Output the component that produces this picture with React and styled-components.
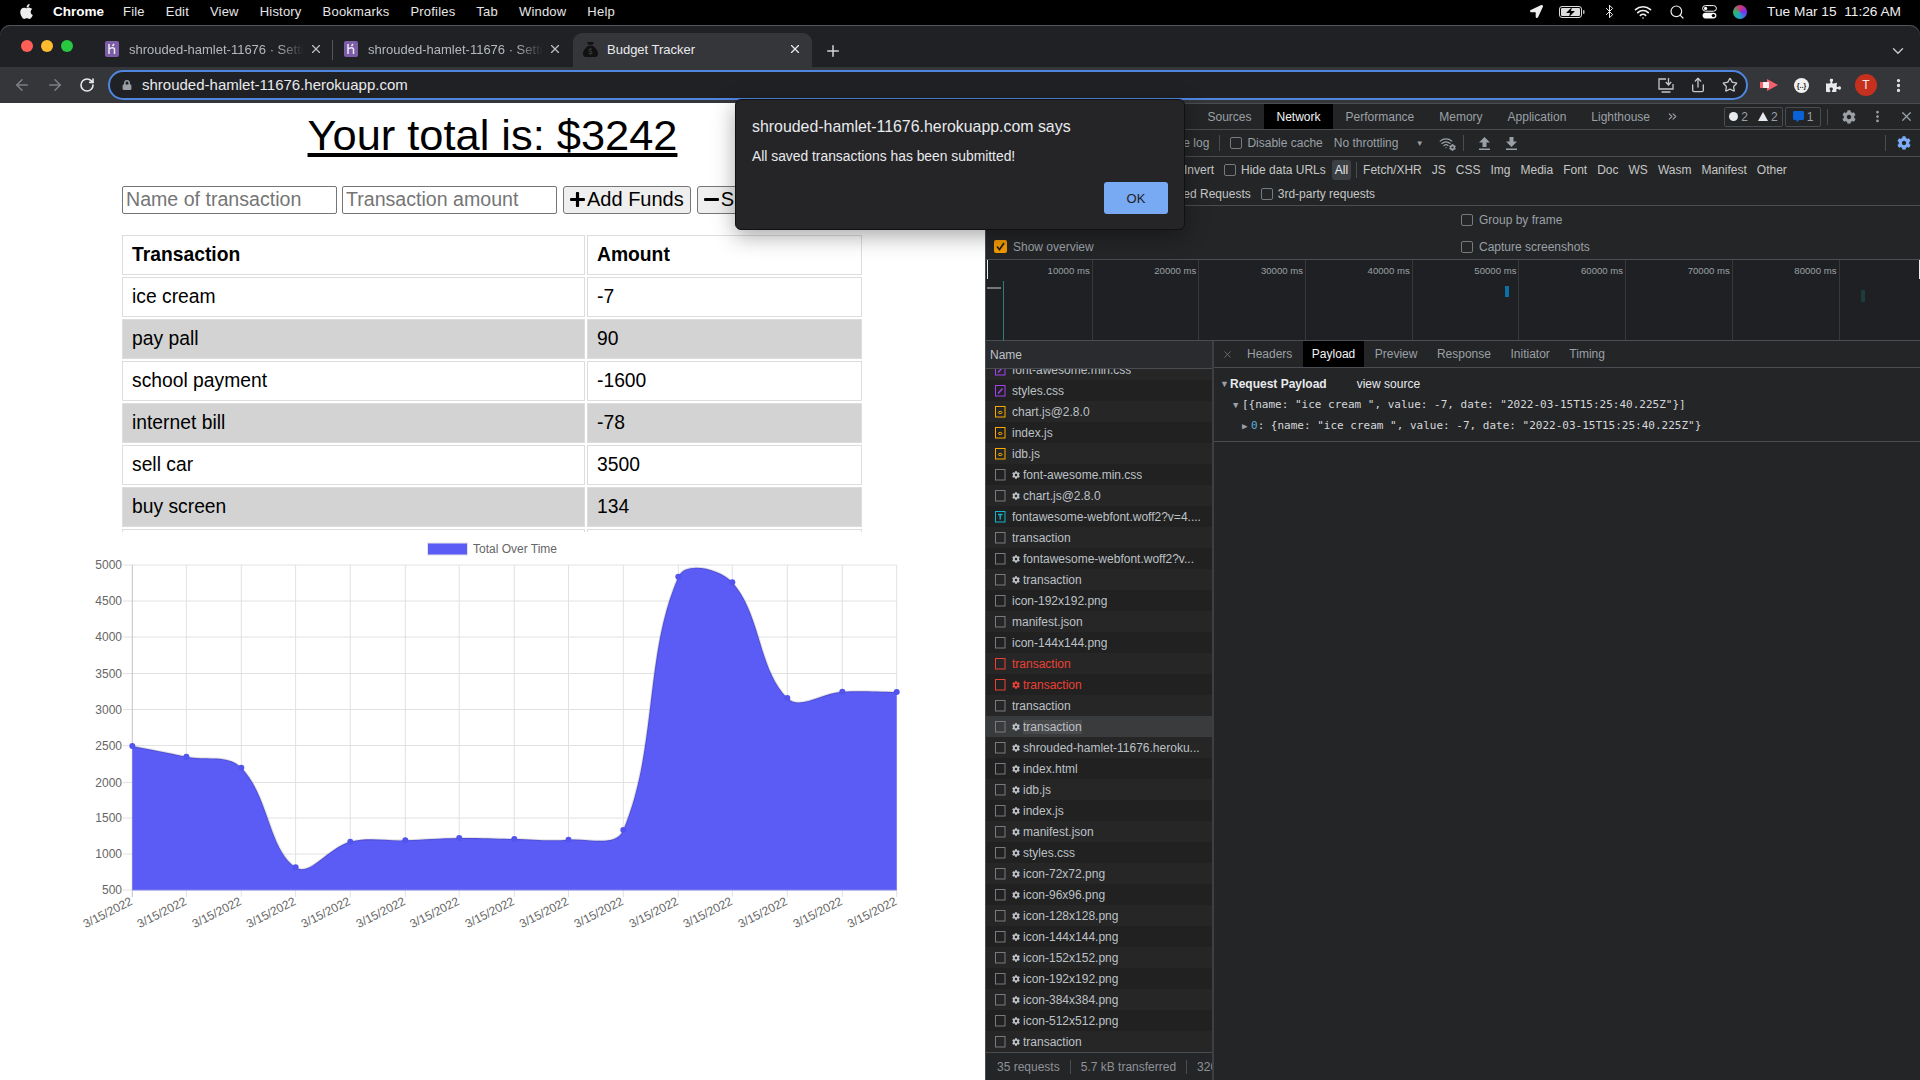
import React from 'react';
import styled, { createGlobalStyle } from 'styled-components';
import {
	ArrowLeft,
	ArrowRight,
	RotateCw,
	Star,
	Share,
	X,
	Plus,
	ChevronDown,
	Search,
	Bluetooth,
	Wifi,
	EllipsisVertical,
	ChevronsRight,
} from 'lucide-react';
import { FaApple, FaPlus, FaMinus, FaCog, FaPuzzlePiece, FaLocationArrow, FaLock, FaCommentAlt } from 'react-icons/fa';
import { FaSackDollar } from 'react-icons/fa6';

const SANS = '"Liberation Sans", Arial, sans-serif';

const MENU = ['File', 'Edit', 'View', 'History', 'Bookmarks', 'Profiles', 'Tab', 'Window', 'Help'];

const ROWS = [
	['ice cream', '-7'],
	['pay pall', '90'],
	['school payment', '-1600'],
	['internet bill', '-78'],
	['sell car', '3500'],
	['buy screen', '134'],
	['', ''],
];

const FILTERS = ['Fetch/XHR', 'JS', 'CSS', 'Img', 'Media', 'Font', 'Doc', 'WS', 'Wasm', 'Manifest', 'Other'];
const TICKS = ['10000 ms', '20000 ms', '30000 ms', '40000 ms', '50000 ms', '60000 ms', '70000 ms', '80000 ms', '900'];

const REQUESTS = [
	{ name: 'font-awesome.min.css', kind: 'css' },
	{ name: 'styles.css', kind: 'css' },
	{ name: 'chart.js@2.8.0', kind: 'js' },
	{ name: 'index.js', kind: 'js' },
	{ name: 'idb.js', kind: 'js' },
	{ name: 'font-awesome.min.css', gear: true },
	{ name: 'chart.js@2.8.0', gear: true },
	{ name: 'fontawesome-webfont.woff2?v=4....', kind: 'font' },
	{ name: 'transaction' },
	{ name: 'fontawesome-webfont.woff2?v...', gear: true },
	{ name: 'transaction', gear: true },
	{ name: 'icon-192x192.png' },
	{ name: 'manifest.json' },
	{ name: 'icon-144x144.png' },
	{ name: 'transaction', kind: 'error' },
	{ name: 'transaction', kind: 'error', gear: true },
	{ name: 'transaction' },
	{ name: 'transaction', gear: true, selected: true },
	{ name: 'shrouded-hamlet-11676.heroku...', gear: true },
	{ name: 'index.html', gear: true },
	{ name: 'idb.js', gear: true },
	{ name: 'index.js', gear: true },
	{ name: 'manifest.json', gear: true },
	{ name: 'styles.css', gear: true },
	{ name: 'icon-72x72.png', gear: true },
	{ name: 'icon-96x96.png', gear: true },
	{ name: 'icon-128x128.png', gear: true },
	{ name: 'icon-144x144.png', gear: true },
	{ name: 'icon-152x152.png', gear: true },
	{ name: 'icon-192x192.png', gear: true },
	{ name: 'icon-384x384.png', gear: true },
	{ name: 'icon-512x512.png', gear: true },
	{ name: 'transaction', gear: true },
];

// chart points in page pixels, read off the screenshot
const CHART_TOP = 532;
const POINTS = [
	[132.3, 746], [186.4, 756.7], [241.3, 767.7], [295.6, 867.3], [350.3, 841.7],
	[405.3, 840.3], [459.2, 838], [514.3, 839], [568.5, 839.7], [623.3, 830],
	[678.3, 576.7], [732.3, 582.3], [787.3, 698], [842.3, 691.7], [896.7, 692],
];
const GRID_Y = [
	[5000, 565], [4500, 601], [4000, 637], [3500, 673.5], [3000, 709.5],
	[2500, 745.5], [2000, 782.5], [1500, 818], [1000, 854], [500, 890],
];

function splinePath(points) {
	const tension = 0.38;
	const controls = points.map((cur, i) => {
		const prev = points[i - 1] || cur;
		const next = points[i + 1] || cur;
		const d01 = Math.hypot(cur[0] - prev[0], cur[1] - prev[1]);
		const d12 = Math.hypot(next[0] - cur[0], next[1] - cur[1]);
		const s01 = d01 / (d01 + d12);
		const s12 = d12 / (d01 + d12);
		return {
			before: [cur[0] - tension * s01 * (next[0] - prev[0]), cur[1] - tension * s01 * (next[1] - prev[1])],
			after: [cur[0] + tension * s12 * (next[0] - prev[0]), cur[1] + tension * s12 * (next[1] - prev[1])],
		};
	});
	let d = `M${points[0][0]} ${points[0][1] - CHART_TOP}`;
	for (let i = 1; i < points.length; i++) {
		const a = controls[i - 1].after;
		const b = controls[i].before;
		d += ` C${a[0]} ${a[1] - CHART_TOP} ${b[0]} ${b[1] - CHART_TOP} ${points[i][0]} ${points[i][1] - CHART_TOP}`;
	}
	return d;
}

function Chart() {
	const line = splinePath(POINTS);
	const area = `${line} L896.7 ${890 - CHART_TOP} L132.3 ${890 - CHART_TOP} Z`;
	return (
		<ChartSvg viewBox="0 0 985 400">
			<rect x="427.5" y="11" width="40" height="12" fill="#5b5bf6" stroke="#e4e4e4" />
			<ChartText x="473" y="21">Total Over Time</ChartText>
			{GRID_Y.map(([label, y]) => (
				<g key={label}>
					<line x1="123" x2="896.7" y1={y - CHART_TOP} y2={y - CHART_TOP} stroke="#e2e2e2" />
					<ChartText x="122" y={y - CHART_TOP + 4} textAnchor="end">{label}</ChartText>
				</g>
			))}
			{POINTS.map(([x], i) => (
				<g key={i}>
					<line x1={x} x2={x} y1={565 - CHART_TOP} y2={897 - CHART_TOP} stroke={i === 0 ? '#c4c4c4' : '#e2e2e2'} />
					<ChartText x={x + 1} y={904 - CHART_TOP} textAnchor="end" transform={`rotate(-27 ${x + 1} ${904 - CHART_TOP})`}>
						3/15/2022
					</ChartText>
				</g>
			))}
			<path d={area} fill="#5b5bf6" />
			<path d={line} fill="none" stroke="rgba(0,0,0,0.12)" strokeWidth="2" />
			<line x1="132.3" x2="896.7" y1={890 - CHART_TOP} y2={890 - CHART_TOP} stroke="#8585f0" />
			{POINTS.map(([x, y], i) => (
				<circle key={i} cx={x} cy={y - CHART_TOP} r="3" fill="#5353ee" />
			))}
		</ChartSvg>
	);
}

function HerokuIcon() {
	return (
		<svg width="14" height="16" viewBox="0 0 14 16">
			<rect width="14" height="16" rx="2" fill="#7b5ea7" />
			<path d="M4 3v10M4 8c2-1.6 5-2 5.5 0v5M9 3 7.5 5" stroke="#eee" strokeWidth="1.5" fill="none" />
		</svg>
	);
}

function Battery() {
	return (
		<svg width="26" height="12" viewBox="0 0 26 12">
			<rect x="0.5" y="0.5" width="22" height="11" rx="2.5" fill="none" stroke="#ddd" />
			<rect x="2" y="2" width="19" height="8" rx="1.2" fill="#ddd" />
			<rect x="24" y="4" width="1.5" height="4" rx="0.7" fill="#bbb" />
			<path d="M13 1 7 7h4l-1 4 6-6h-4z" fill="#000" />
		</svg>
	);
}

function ControlCenter() {
	return (
		<svg width="15" height="14" viewBox="0 0 15 14">
			<rect x="0.6" y="0.6" width="13.8" height="5.6" rx="2.8" fill="none" stroke="#fff" />
			<circle cx="3.6" cy="3.4" r="1.6" fill="#fff" />
			<rect x="0.6" y="7.8" width="13.8" height="5.6" rx="2.8" fill="#fff" />
			<circle cx="11.4" cy="10.6" r="1.7" fill="#000" />
		</svg>
	);
}

function Install() {
	return (
		<svg width="16" height="15" viewBox="0 0 16 15" fill="none" stroke="#c4c7c5" strokeWidth="1.3">
			<path d="M8 1h-7v10h14v-5" />
			<path d="M3.5 14h9" />
			<path d="M10.5 0v6.5M7.8 4l2.7 3 2.7-3" />
		</svg>
	);
}

function Pointer() {
	return (
		<svg width="18" height="12" viewBox="0 0 18 12">
			<path d="M0 3h7V0l11 6-11 6V9H0z" fill="#f4606c" />
			<rect x="3" y="3" width="6" height="6" fill="#fff" opacity="0.9" />
		</svg>
	);
}

function FileIcon({ kind }) {
	const color = { css: '#a142f4', js: '#f9ab00', font: '#12b5cb', error: '#e94235' }[kind] || '#777a7e';
	return (
		<FileSvg width="11" height="12" viewBox="0 0 11 12">
			<rect x="0.5" y="0.5" width="9.5" height="10.5" fill="none" stroke={color} />
			{kind === 'css' && <path d="M3 8.5 7.5 3.5" stroke={color} strokeWidth="1.4" />}
			{kind === 'js' && <ellipse cx="5.2" cy="6.5" rx="1.8" ry="1.1" fill="none" stroke={color} />}
			{kind === 'font' && <path d="M3 3.5h4.5M5.2 3.5v5" stroke={color} strokeWidth="1.4" />}
		</FileSvg>
	);
}

function Arrow({ down }) {
	return (
		<ArrowSvg width="11" height="13" viewBox="0 0 11 13" fill="#9aa0a6">
			<path d={down ? 'M3.5 0h4v4.5H11L5.5 10 0 4.5h3.5z' : 'M5.5 0 11 5.5H7.5V10h-4V5.5H0z'} />
			<rect y="11.5" width="11" height="1.5" />
		</ArrowSvg>
	);
}

function Checked() {
	return (
		<svg width="13" height="13" viewBox="0 0 13 13">
			<rect width="13" height="13" rx="2" fill="#f29900" />
			<path d="M3 6.5 5.5 9.5 10 3" stroke="#222" strokeWidth="1.7" fill="none" />
		</svg>
	);
}

function App() {
	return (
		<Screen>
			<GlobalStyle />
			<MenuBar>
				<AppleMark><FaApple size={17} /></AppleMark>
				<MenuApp>Chrome</MenuApp>
				{MENU.map((item) => <MenuItem key={item}>{item}</MenuItem>)}
				<MenuStatus>
					<FaLocationArrow size={13} />
					<Battery />
					<Bluetooth size={15} strokeWidth={1.6} />
					<Wifi size={18} strokeWidth={2.2} />
					<Search size={16} strokeWidth={1.8} />
					<ControlCenter />
					<Siri />
					<Clock>Tue Mar 15&nbsp;&nbsp;11:26 AM</Clock>
				</MenuStatus>
			</MenuBar>

			<Window>
				<TabStrip>
					<Lights>
						<Light $color="#ff5f57" />
						<Light $color="#febc2e" />
						<Light $color="#28c840" />
					</Lights>
					<BrowserTab>
						<HerokuIcon />
						<TabTitle>shrouded-hamlet-11676 · Settings</TabTitle>
						<X size={14} />
					</BrowserTab>
					<TabSeparator />
					<BrowserTab>
						<HerokuIcon />
						<TabTitle>shrouded-hamlet-11676 · Settings</TabTitle>
						<X size={14} />
					</BrowserTab>
					<ActiveTab>
						<FaSackDollar size={15} color="#111" />
						<ActiveTitle>Budget Tracker</ActiveTitle>
						<X size={14} />
					</ActiveTab>
					<NewTab><Plus size={18} /></NewTab>
					<StripEnd><ChevronDown size={18} /></StripEnd>
				</TabStrip>

				<Toolbar>
					<NavButtons>
						<ArrowLeft size={18} color="#7c7f84" />
						<ArrowRight size={18} color="#7c7f84" />
						<RotateCw size={16} color="#e8eaed" strokeWidth={2.4} />
					</NavButtons>
					<AddressBar>
						<FaLock size={10} color="#9aa0a6" />
						<Url>shrouded-hamlet-11676.herokuapp.com</Url>
						<AddressIcons>
							<Install />
							<Share size={16} color="#c4c7c5" />
							<Star size={16} color="#c4c7c5" />
						</AddressIcons>
					</AddressBar>
					<Extensions>
						<Pointer />
						<DotExt>{'{..}'}</DotExt>
						<FaPuzzlePiece size={15} color="#e8eaed" />
						<Avatar>T</Avatar>
						<EllipsisVertical size={17} color="#e8eaed" strokeWidth={2.6} />
					</Extensions>
				</Toolbar>

				<Main>
					<Page>
						<Total>Your total is: $3242</Total>
						<Form>
							<Field placeholder="Name of transaction" />
							<Field placeholder="Transaction amount" />
							<FundsButton><FaPlus size={17} />Add Funds</FundsButton>
							<FundsButton><FaMinus size={17} />Subtract Funds</FundsButton>
						</Form>
						<TableClip>
							<Table>
								<thead>
									<tr>
										<HeadCell $first>Transaction</HeadCell>
										<HeadCell>Amount</HeadCell>
									</tr>
								</thead>
								<tbody>
									{ROWS.map(([name, value], i) => (
										<BodyRow key={i}>
											<BodyCell>{name}</BodyCell>
											<BodyCell>{value}</BodyCell>
										</BodyRow>
									))}
								</tbody>
							</Table>
						</TableClip>
						<Chart />
					</Page>

					<DevTools>
						<PanelTabs>
							<PanelTab>Sources</PanelTab>
							<PanelTab $active>Network</PanelTab>
							<PanelTab>Performance</PanelTab>
							<PanelTab>Memory</PanelTab>
							<PanelTab>Application</PanelTab>
							<PanelTab>Lighthouse</PanelTab>
							<More><ChevronsRight size={13} /></More>
							<PanelRight>
								<Badge $width="59px" $after="-12px"><BadgeDot />2<BadgeTriangle />2</Badge>
								<Badge $width="36px" $after="-8px"><FaCommentAlt size={11} color="#0b62d6" />1</Badge>
								<Rule />
								<FaCog size={14} />
								<EllipsisVertical size={15} strokeWidth={2.4} />
								<X size={15} />
							</PanelRight>
						</PanelTabs>

						<ThrottleRow>
							<Label>Preserve log</Label>
							<Rule />
							<Box />
							<BoxLabel>Disable cache</BoxLabel>
							<Throttle>No throttling<Caret>▼</Caret></Throttle>
							<WifiGear>
								<Wifi size={14} />
								<GearBadge><FaCog size={7} /></GearBadge>
							</WifiGear>
							<Rule />
							<Arrow />
							<Arrow down />
							<RowEnd>
								<Rule />
								<FaCog size={14} color="#7cacf8" />
							</RowEnd>
						</ThrottleRow>

						<FilterRow>
							<FilterLabel>Invert</FilterLabel>
							<Box />
							<BoxFilterLabel>Hide data URLs</BoxFilterLabel>
							<AllPill>All</AllPill>
							<FilterRule />
							{FILTERS.map((item) => <FilterLabel key={item}>{item}</FilterLabel>)}
						</FilterRow>

						<BlockedRow>
							<FilterLabel>Blocked Requests</FilterLabel>
							<Box />
							<BoxFilterLabel>3rd-party requests</BoxFilterLabel>
						</BlockedRow>

						<Settings>
							<SettingsCell />
							<SettingsCell>
								<Box />
								<Label>Group by frame</Label>
							</SettingsCell>
							<SettingsCell $pad="8px">
								<Checked />
								<Label>Show overview</Label>
							</SettingsCell>
							<SettingsCell>
								<Box />
								<Label>Capture screenshots</Label>
							</SettingsCell>
						</Settings>

						<Overview>
							{TICKS.map((tick) => <Tick key={tick}>{tick}</Tick>)}
							<Handle $side="left" />
							<Handle $side="right" />
							<Mark $x={1} $y={27} $w={14} $h={2} $color="#777" />
							<Mark $x={17} $y={21} $w={1} $h={60} $color="#2a7f7a" />
							<Mark $x={519} $y={26} $w={4} $h={11} $color="#0b6fa8" />
							<Mark $x={875} $y={30} $w={4} $h={12} $color="#1d3c3e" />
						</Overview>

						<Split>
							<NamePanel>
								<NameHead>Name</NameHead>
								<RequestClip>
									<RequestList>
										{REQUESTS.map((req, i) => (
											<Request key={i} $selected={req.selected} $error={req.kind === 'error'}>
												<FileIcon kind={req.kind} />
												{req.gear && <FaCog size={8} />}
												<RequestName $selected={req.selected}>{req.name}</RequestName>
											</Request>
										))}
									</RequestList>
								</RequestClip>
								<Summary>
									<SummaryItem>35 requests</SummaryItem>
									<SummaryItem>5.7 kB transferred</SummaryItem>
									<SummaryItem>320 kB resources</SummaryItem>
								</Summary>
							</NamePanel>
							<DetailPanel>
								<DetailTabs>
									<Close><X size={11} /></Close>
									<DetailTab>Headers</DetailTab>
									<DetailTab $active>Payload</DetailTab>
									<DetailTab>Preview</DetailTab>
									<DetailTab>Response</DetailTab>
									<DetailTab>Initiator</DetailTab>
									<DetailTab>Timing</DetailTab>
								</DetailTabs>
								<Payload>
									<PayloadHead>
										<Tri>▼</Tri>
										<strong>Request Payload</strong>
										<ViewSource>view source</ViewSource>
									</PayloadHead>
									<CodeLine $indent="19px">
										<Tri>▼</Tri>
										{'[{name: "ice cream ", value: -7, date: "2022-03-15T15:25:40.225Z"}]'}
									</CodeLine>
									<CodeLine $indent="28px">
										<Tri>▶</Tri>
										<Key>0</Key>
										{': {name: "ice cream ", value: -7, date: "2022-03-15T15:25:40.225Z"}'}
									</CodeLine>
								</Payload>
							</DetailPanel>
						</Split>
					</DevTools>

					<Dialog>
						<DialogTitle>shrouded-hamlet-11676.herokuapp.com says</DialogTitle>
						<DialogText>All saved transactions has been submitted!</DialogText>
						<DialogFoot>
							<OkButton>OK</OkButton>
						</DialogFoot>
					</Dialog>
				</Main>
			</Window>
		</Screen>
	);
}

export default App;

const GlobalStyle = createGlobalStyle`
	html, body {
		margin: 0;
		padding: 0;
		background: #000;
	}
	* {
		box-sizing: border-box;
	}
`;

const Screen = styled.div`
	width: 1920px;
	height: 1080px;
	display: flex;
	flex-direction: column;
	overflow: hidden;
	background: #000;
	font-family: ${SANS};
`;

const MenuBar = styled.div`
	height: 25px;
	flex: none;
	display: flex;
	align-items: center;
	gap: 21px;
	padding: 0 19px 2px 18px;
	color: #e6e6e6;
	font-size: 13px;
`;

const AppleMark = styled.span`
	display: flex;
	color: #eee;
	margin-right: -3px;
`;

const MenuApp = styled.span`
	font-weight: 700;
	font-size: 13.5px;
	color: #fff;
	margin-right: -2px;
`;

const MenuItem = styled.span`
	letter-spacing: 0.2px;
`;

const MenuStatus = styled.div`
	margin-left: auto;
	display: flex;
	align-items: center;
	gap: 16.8px;
	color: #eee;
`;

const Siri = styled.span`
	width: 14px;
	height: 14px;
	border-radius: 50%;
	background: conic-gradient(#d6336c, #7b2ff7, #1fa2c9, #2bb673, #d6336c);
`;

const Clock = styled.span`
	margin-left: 3px;
	font-size: 13.7px;
`;

const Window = styled.div`
	flex: 1;
	min-height: 0;
	display: flex;
	flex-direction: column;
	border-radius: 10px 10px 0 0;
	overflow: hidden;
	background: #202124;
	box-shadow: inset 0 1px 0 #55565a;
`;

const TabStrip = styled.div`
	height: 42px;
	flex: none;
	display: flex;
	align-items: flex-end;
	color: #bdc1c6;
`;

const Lights = styled.div`
	width: 105px;
	height: 100%;
	flex: none;
	display: flex;
	align-items: center;
	gap: 8px;
	padding: 0 0 0 21px;
`;

const Light = styled.span`
	width: 12px;
	height: 12px;
	border-radius: 50%;
	background: ${(props) => props.$color};
`;

const BrowserTab = styled.div`
	width: 227px;
	height: 34px;
	flex: none;
	display: flex;
	align-items: center;
	gap: 10px;
	font-size: 13px;
	padding: 0 9px 2px 0;
`;

const TabTitle = styled.span`
	flex: 1;
	overflow: hidden;
	white-space: nowrap;
	color: #b4b8bd;
	margin-right: -5px;
	mask-image: linear-gradient(to right, #000 85%, transparent 100%);
`;

const TabSeparator = styled.span`
	width: 1px;
	height: 20px;
	background: #55565a;
	margin: 0 11px 7px 0;
	flex: none;
`;

const ActiveTab = styled.div`
	width: 239px;
	height: 34px;
	flex: none;
	display: flex;
	align-items: center;
	gap: 9px;
	padding: 0 10px 2px 10px;
	margin-left: 2px;
	border-radius: 9px 9px 0 0;
	background: #35363a;
	color: #e8eaed;
	font-size: 13px;
`;

const ActiveTitle = styled.span`
	flex: 1;
`;

const NewTab = styled.span`
	margin: 0 0 7px 12px;
	display: flex;
	color: #d0d3d6;
`;

const StripEnd = styled.span`
	margin: 0 13px 7px auto;
	display: flex;
`;

const Toolbar = styled.div`
	height: 36px;
	flex: none;
	display: flex;
	align-items: center;
	background: #35363a;
`;

const NavButtons = styled.div`
	width: 108px;
	flex: none;
	display: flex;
	align-items: center;
	gap: 15px;
	padding-left: 13px;
`;

const AddressBar = styled.div`
	width: 1640px;
	height: 30px;
	flex: none;
	display: flex;
	align-items: center;
	gap: 10px;
	padding: 0 8px 0 12px;
	border: 2px solid #4f86e0;
	border-radius: 15px;
	background: #202124;
`;

const Url = styled.span`
	flex: 1;
	color: #e8eaed;
	font-size: 15px;
	margin-bottom: 2px;
`;

const AddressIcons = styled.div`
	display: flex;
	align-items: center;
	gap: 16px;
`;

const Extensions = styled.div`
	flex: 1;
	display: grid;
	grid-template-columns: repeat(5, 32.3px);
	justify-items: center;
	align-items: center;
	padding-left: 5px;
`;

const DotExt = styled.span`
	width: 15px;
	height: 15px;
	border-radius: 50%;
	background: #f1f1f1;
	color: #222;
	font-size: 7px;
	font-weight: 700;
	text-align: center;
	line-height: 15px;
`;

const Avatar = styled.span`
	width: 22px;
	height: 22px;
	border-radius: 50%;
	background: #c5301f;
	color: #f6e6e3;
	font-size: 12px;
	line-height: 22px;
	text-align: center;
`;

const Main = styled.div`
	position: relative;
	flex: 1;
	min-height: 0;
	display: flex;
`;

const Page = styled.div`
	width: 985px;
	flex: none;
	background: #fff;
	overflow: hidden;
`;

const Total = styled.h1`
	margin: 6px 0 0;
	height: 52px;
	line-height: 53px;
	text-align: center;
	font-size: 43.4px;
	font-weight: 400;
	color: #000;
	text-decoration: underline;
`;

const Form = styled.div`
	display: flex;
	gap: 5px;
	margin: 25px 0 0 122px;
	width: 800px;
`;

const Field = styled.input`
	width: 215px;
	height: 28px;
	padding: 0 3px 2px;
	border: 1px solid #767676;
	border-radius: 2px;
	font: 19.6px ${SANS};
	&::placeholder {
		color: #757575;
	}
`;

const FundsButton = styled.button`
	height: 28px;
	display: flex;
	align-items: center;
	gap: 1px;
	padding: 0 6px 2px 5px;
	margin-left: 1px;
	flex: none;
	border: 1px solid #767676;
	border-radius: 3px;
	background: #efefef;
	color: #000;
	font: 20px ${SANS};
`;

const TableClip = styled.div`
	height: 299px;
	margin-top: 19px;
	overflow: hidden;
`;

const Table = styled.table`
	width: 744px;
	margin-left: 120px;
	border-collapse: separate;
	border-spacing: 2px;
	table-layout: fixed;
	font-size: 19.3px;
	color: #000;
`;

const HeadCell = styled.th`
	width: ${(props) => (props.$first ? '463px' : 'auto')};
	height: 40px;
	padding: 0 9px;
	border: 1px solid #ddd;
	text-align: left;
`;

const BodyRow = styled.tr`
	&:nth-child(even) td {
		background: #d3d3d3;
	}
`;

const BodyCell = styled.td`
	height: 40px;
	padding: 0 9px;
	border: 1px solid #ddd;
`;

const ChartSvg = styled.svg`
	display: block;
	width: 985px;
	height: 400px;
`;

const ChartText = styled.text`
	fill: #666;
	font-family: ${SANS};
	font-size: 12px;
`;

const DevTools = styled.div`
	flex: 1;
	min-width: 0;
	display: flex;
	flex-direction: column;
	border-left: 1px solid #494c50;
	background: #242527;
	color: #9aa0a6;
	font-size: 12px;
`;

const PanelTabs = styled.div`
	height: 27px;
	flex: none;
	display: flex;
	align-items: stretch;
	padding-left: 209px;
	border-top: 1px solid #494c50;
	border-bottom: 1px solid #494c50;
`;

const PanelTab = styled.span`
	display: flex;
	align-items: center;
	padding: 0 12.5px;
	background: ${(props) => (props.$active ? '#000' : 'transparent')};
	color: ${(props) => (props.$active ? '#f1f3f4' : '#9aa0a6')};
`;

const DetailTab = styled.span`
	display: flex;
	align-items: center;
	padding: 0 9px;
	margin-right: 1.5px;
	background: ${(props) => (props.$active ? '#000' : 'transparent')};
	color: ${(props) => (props.$active ? '#f1f3f4' : '#9aa0a6')};
`;

const More = styled.span`
	display: flex;
	align-items: center;
	margin-left: 3px;
`;

const PanelRight = styled.div`
	margin-left: auto;
	display: flex;
	align-items: center;
	gap: 14px;
	padding-right: 6px;
`;

const Badge = styled.span`
	width: ${(props) => props.$width};
	height: 20px;
	display: flex;
	align-items: center;
	justify-content: center;
	gap: 3px;
	margin-right: ${(props) => props.$after};
	border: 1px solid #494c50;
	border-radius: 2px;
`;

const BadgeDot = styled.i`
	width: 9px;
	height: 9px;
	border-radius: 50%;
	background: #e8eaed;
`;

const BadgeTriangle = styled.i`
	margin-left: 7px;
	border-left: 5px solid transparent;
	border-right: 5px solid transparent;
	border-bottom: 9px solid #e8eaed;
`;

const Rule = styled.span`
	width: 1px;
	height: 16px;
	flex: none;
	background: #494c50;
`;

const ThrottleRow = styled.div`
	height: 27px;
	flex: none;
	display: flex;
	align-items: center;
	gap: 10px;
	padding-left: 156px;
	border-bottom: 1px solid #494c50;
`;

const Label = styled.span`
	white-space: nowrap;
`;

const BoxLabel = styled(Label)`
	margin-left: -5px;
`;

const Box = styled.span`
	width: 12px;
	height: 12px;
	flex: none;
	border: 1px solid #777a7e;
	border-radius: 2px;
`;

const Throttle = styled.span`
	display: flex;
	align-items: center;
	width: 90px;
	justify-content: space-between;
	margin: 0 5px 0 1px;
`;

const Caret = styled.span`
	font-size: 8px;
`;

const WifiGear = styled.span`
	position: relative;
	display: flex;
`;

const GearBadge = styled.span`
	position: absolute;
	right: -3px;
	bottom: -1px;
	display: flex;
	border-radius: 50%;
	background: #242527;
`;

const ArrowSvg = styled.svg`
	margin-left: 5.5px;
`;

const RowEnd = styled.div`
	margin-left: auto;
	display: flex;
	align-items: center;
	gap: 11px;
	padding-right: 9px;
`;

const FilterRow = styled.div`
	height: 26px;
	flex: none;
	display: flex;
	align-items: center;
	gap: 10px;
	padding-left: 198px;
`;

const FilterLabel = styled.span`
	white-space: nowrap;
	color: #c4c7c5;
`;

const BoxFilterLabel = styled(FilterLabel)`
	margin-left: -5px;
`;

const FilterRule = styled(Rule)`
	margin-right: -4px;
`;

const AllPill = styled.span`
	padding: 3px 3px;
	margin-left: -4px;
	margin-right: -5px;
	border-radius: 3px;
	background: #3c3f43;
	color: #e8eaed;
`;

const BlockedRow = styled.div`
	height: 23px;
	flex: none;
	display: flex;
	align-items: center;
	gap: 10px;
	padding-left: 168px;
	border-bottom: 1px solid #494c50;
`;

const Settings = styled.div`
	height: 54px;
	flex: none;
	display: grid;
	grid-template-columns: 475px 1fr;
	grid-template-rows: 28px 25px;
	border-bottom: 1px solid #494c50;
`;

const SettingsCell = styled.div`
	display: flex;
	align-items: center;
	gap: 6px;
	padding-left: ${(props) => props.$pad || '0'};
`;

const Overview = styled.div`
	position: relative;
	height: 81px;
	flex: none;
	display: grid;
	grid-template-columns: repeat(9, 106.7px);
	border-bottom: 1px solid #494c50;
	background: #1f2023;
`;

const Tick = styled.div`
	padding: 5px 2px 0 0;
	text-align: right;
	font-size: 9.6px;
	border-right: 1px solid #36383c;
	&:last-of-type {
		border-right: none;
	}
`;

const Handle = styled.span`
	position: absolute;
	top: 0;
	${(props) => props.$side}: ${(props) => (props.$side === 'left' ? '1px' : '0')};
	width: 1px;
	height: 19px;
	background: #e8eaed;
`;

const Mark = styled.span`
	position: absolute;
	left: ${(props) => props.$x}px;
	top: ${(props) => props.$y}px;
	width: ${(props) => props.$w}px;
	height: ${(props) => props.$h}px;
	background: ${(props) => props.$color};
`;

const Split = styled.div`
	flex: 1;
	min-height: 0;
	display: flex;
`;

const NamePanel = styled.div`
	width: 228px;
	flex: none;
	display: flex;
	flex-direction: column;
	border-right: 2px solid #3d3f43;
`;

const NameHead = styled.div`
	height: 28px;
	flex: none;
	display: flex;
	align-items: center;
	padding-left: 4px;
	border-bottom: 1px solid #494c50;
	background: #2a2b2e;
	color: #bdc1c6;
`;

const RequestClip = styled.div`
	flex: 1;
	min-height: 0;
	overflow: hidden;
`;

const RequestList = styled.div`
	margin-top: -10px;
`;

const Request = styled.div`
	height: 21px;
	display: flex;
	align-items: center;
	gap: 3px;
	padding-left: 9px;
	color: ${(props) => (props.$error ? '#e94235' : '#bdc1c6')};
	background: ${(props) => (props.$selected ? '#3a3b3d !important' : '#262626')};
	&:nth-child(even) {
		background: #212121;
	}
	svg:first-child {
		margin-right: 3px;
	}
`;

const FileSvg = styled.svg`
	flex: none;
`;

const RequestName = styled.span`
	white-space: nowrap;
	overflow: hidden;
	background: ${(props) => (props.$selected ? '#48494b' : 'transparent')};
`;

const Summary = styled.div`
	height: 28px;
	flex: none;
	display: flex;
	align-items: center;
	overflow: hidden;
	padding-left: 11px;
	border-top: 1px solid #494c50;
	white-space: nowrap;
	color: #8e9297;
`;

const SummaryItem = styled.span`
	padding-right: 10px;
	margin-right: 10px;
	border-right: 1px solid #494c50;
`;

const DetailPanel = styled.div`
	flex: 1;
	min-width: 0;
`;

const DetailTabs = styled.div`
	height: 27px;
	display: flex;
	align-items: stretch;
	padding-left: 8px;
	border-bottom: 1px solid #494c50;
`;

const Close = styled.span`
	display: flex;
	align-items: center;
	margin-right: 5px;
	color: #6e7276;
`;

const Payload = styled.div`
	height: 74px;
	padding-top: 5px;
	border-bottom: 1px solid #494c50;
`;

const PayloadHead = styled.div`
	height: 21px;
	display: flex;
	align-items: center;
	padding-left: 6px;
	color: #e8eaed;
	strong {
		margin-left: 1px;
	}
`;

const Tri = styled.span`
	width: 9px;
	flex: none;
	font-size: 9px;
	color: #9aa0a6;
`;

const ViewSource = styled.span`
	margin-left: 30px;
`;

const CodeLine = styled.div`
	height: 21px;
	display: flex;
	align-items: center;
	padding-left: ${(props) => props.$indent};
	font-family: "DejaVu Sans Mono", "Liberation Mono", monospace;
	font-size: 11px;
	white-space: pre;
	color: #d5d7da;
`;

const Key = styled.span`
	color: #5db0d7;
`;

const Dialog = styled.div`
	position: absolute;
	left: 735px;
	top: -4px;
	width: 450px;
	height: 131px;
	padding: 18px 16px 0;
	border-radius: 6px;
	border: 1px solid #111;
	background: #252528;
	box-shadow: 0 6px 22px rgba(0, 0, 0, 0.35);
	color: #e8eaed;
`;

const DialogTitle = styled.div`
	font-size: 15.9px;
	line-height: 18px;
`;

const DialogText = styled.div`
	margin-top: 12px;
	font-size: 13.85px;
	line-height: 16px;
`;

const DialogFoot = styled.div`
	margin-top: 18px;
	display: flex;
	justify-content: flex-end;
`;

const OkButton = styled.button`
	width: 64px;
	height: 32px;
	border: none;
	border-radius: 3px;
	background: #78a9f3;
	color: #202124;
	font: 13px ${SANS};
`;
